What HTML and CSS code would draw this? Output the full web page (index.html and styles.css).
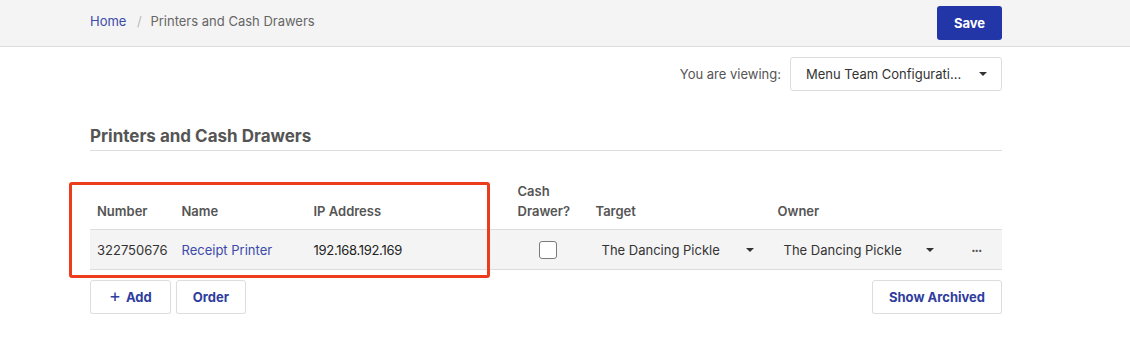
FILE: index.html
```html
<!DOCTYPE html>
<html lang="en">
<head>
  <meta charset="UTF-8" />
  <title>Printers and Cash Drawers</title>
  <link rel="stylesheet" href="styles.css">
</head>
<body>
  <header class="topbar">
    <div class="topbar-inner">
      <nav class="crumbs">
        <a href="#">Home</a>
        <span class="sep">/</span>
        <span class="current">Printers and Cash Drawers</span>
      </nav>
      <button class="btn-primary">Save</button>
    </div>
  </header>

  <main class="page">
    <div class="viewing">
      <span class="viewing-label">You are viewing:</span>
      <div class="select-box">
        <span>Menu Team Configurati...</span>
        <span class="caret"></span>
      </div>
    </div>

    <h2 class="section-title">Printers and Cash Drawers</h2>

    <div class="table-wrap">
      <table class="devices">
        <thead>
          <tr>
            <th class="c-num">Number</th>
            <th class="c-name">Name</th>
            <th class="c-ip">IP Address</th>
            <th class="c-cash">Cash<br>Drawer?</th>
            <th class="c-target">Target</th>
            <th class="c-owner">Owner</th>
            <th class="c-act"></th>
          </tr>
        </thead>
        <tbody>
          <tr>
            <td>322750676</td>
            <td><a href="#">Receipt Printer</a></td>
            <td class="ip">192.168.192.169</td>
            <td class="cash"><span class="checkbox"></span></td>
            <td><div class="inline-select"><span>The Dancing Pickle</span><span class="caret"></span></div></td>
            <td><div class="inline-select"><span>The Dancing Pickle</span><span class="caret"></span></div></td>
            <td class="more">&middot;&middot;&middot;</td>
          </tr>
        </tbody>
      </table>
      <div class="highlight"></div>
    </div>

    <div class="actions">
      <div class="left">
        <button class="btn btn-add"><span class="plus">+</span> Add</button>
        <button class="btn">Order</button>
      </div>
      <button class="btn">Show Archived</button>
    </div>
  </main>
</body>
</html>
```

FILE: styles.css
```css
body {
  margin: 0;
  font-family: Inter, 'Noto Sans', sans-serif;
  font-size: 13px;
  color: #333;
  background: #fff;
}

a {
  color: #3b4aab;
  text-decoration: none;
}

.topbar {
  background: #f4f4f4;
  border-bottom: 1px solid #dcdcdc;
  height: 46px;
}

.topbar-inner {
  width: 912px;
  margin-left: 90px;
  height: 44px;
  display: flex;
  align-items: center;
  justify-content: space-between;
}

.crumbs {
  color: #666;
  margin-top: -2px;
}

.crumbs .sep {
  color: #bbb;
  margin: 0 5px 0 7px;
}

.btn-primary {
  background: #2336a8;
  color: #fff;
  border: none;
  border-radius: 3px;
  font-family: inherit;
  font-weight: 700;
  font-size: 13px;
  width: 65px;
  height: 34px;
  margin-top: 1px;
}

.page {
  width: 912px;
  margin-left: 90px;
}

.viewing {
  display: flex;
  justify-content: flex-end;
  align-items: center;
  gap: 9px;
  margin-top: 10px;
}

.viewing-label {
  color: #555;
}

.select-box {
  width: 212px;
  height: 34px;
  box-sizing: border-box;
  border: 1px solid #ddd;
  border-radius: 3px;
  display: flex;
  align-items: center;
  justify-content: space-between;
  padding: 0 14px 0 15px;
  color: #333;
}

.caret {
  width: 0;
  height: 0;
  border-left: 4px solid transparent;
  border-right: 4px solid transparent;
  border-top: 4px solid #333;
}

.section-title {
  font-size: 17px;
  font-weight: 700;
  color: #555;
  margin: 35px 0 0;
  padding-bottom: 4px;
  border-bottom: 1px solid #ddd;
}

.table-wrap {
  position: relative;
  margin-top: 30px;
}

.devices {
  width: 100%;
  border-collapse: collapse;
}

.devices th {
  text-align: left;
  vertical-align: bottom;
  font-weight: 600;
  color: #555;
  padding: 0 7px 8px;
  line-height: 20px;
  border-bottom: 1px solid #dcdcdc;
}

.devices td {
  background: #f4f4f4;
  height: 39px;
  padding: 0 7px;
  border-bottom: 1px solid #dcdcdc;
}

.c-num { width: 70px; }
.c-name { width: 118px; }
.c-ip { width: 190px; }
.c-cash { width: 64px; }
.c-target { width: 168px; }
.c-owner { width: 166px; }

.devices td.ip {
  color: #222;
  letter-spacing: -0.3px;
}

.cash {
  text-align: center;
}

.checkbox {
  display: inline-block;
  width: 16px;
  height: 16px;
  border: 1px solid #7a7a7a;
  border-radius: 3px;
  background: #fff;
  vertical-align: middle;
  margin-right: 4px;
}

.inline-select {
  display: flex;
  align-items: center;
  justify-content: space-between;
  padding: 0 10px 0 6px;
  color: #333;
}

.more {
  text-align: center;
  color: #555;
  font-weight: 700;
  letter-spacing: -1px;
}

.highlight {
  position: absolute;
  left: -21px;
  top: 1px;
  width: 421px;
  height: 96px;
  box-sizing: border-box;
  border: 3px solid #ec3c1c;
  border-radius: 3px;
}

.actions {
  display: flex;
  justify-content: space-between;
  margin-top: 10px;
}

.actions .left {
  display: flex;
  gap: 5px;
}

.btn {
  height: 34px;
  padding: 0 16px;
  background: #fff;
  border: 1px solid #ddd;
  border-radius: 3px;
  box-shadow: 0 1px 1px rgba(0, 0, 0, 0.06);
  font-family: inherit;
  font-size: 13px;
  font-weight: 700;
  color: #2f3d9e;
}

.btn-add {
  display: flex;
  align-items: center;
  padding: 0 18px;
}

.plus {
  font-size: 18px;
  font-weight: 400;
  line-height: 1;
  margin: -2px 5px 0 0;
}
```
